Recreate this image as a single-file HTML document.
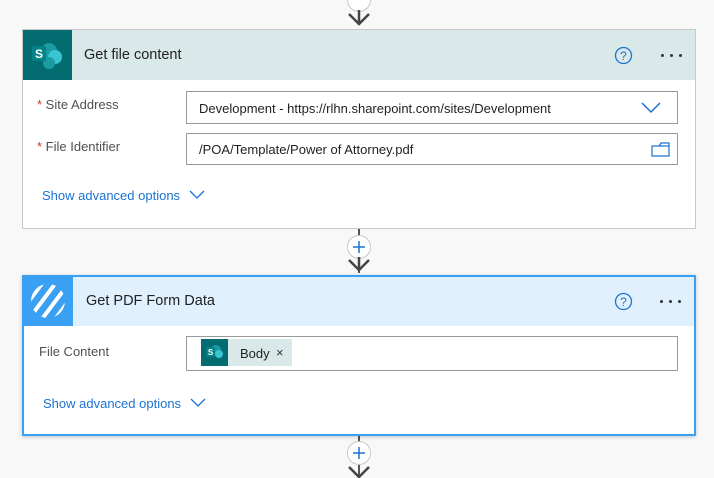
<!DOCTYPE html><html><head><style>
body{margin:0;width:714px;height:475px;background:#f8f8f8;font-family:"Liberation Sans",sans-serif;position:relative;overflow:hidden;font-size:13px;color:#323130}
.abs{position:absolute}
.card{position:absolute;left:22px;width:674px;background:#fff}
.lbl{position:absolute;font-size:13px;color:#505050}
.req{color:#d13438}
.inp{position:absolute;left:163px;width:492px;border:1px solid #9a9a9a;background:#fff;box-sizing:border-box;font-size:13px;color:#222}
.adv{position:absolute;color:#1a73d4;font-size:13px}
.plus{position:absolute;left:347px;width:22px;height:22px;border:1.5px solid #c8c8c8;border-radius:50%;background:#fff}
.dots{position:absolute;width:22px;height:4px}
.dots i{position:absolute;top:0;width:3px;height:3px;border-radius:50%;background:#333}
</style></head><body>
<div class="abs" style="left:358px;top:0;width:2px;height:20px;background:#555"></div>
<div class="plus" style="top:-12px"></div>
<svg class="abs" style="left:347px;top:10px" width="24" height="20"><path d="M2 4L12 14L22 4M12 0V15" stroke="#444" stroke-width="2.5" fill="none"/></svg>
<div class="abs" style="left:358px;top:229px;width:2px;height:44px;background:#555"></div>
<div class="plus" style="top:235px"><svg width="22" height="22" style="position:absolute;left:0;top:0"><path d="M11 5V17M5 11H17" stroke="#1a73d4" stroke-width="1.5"/></svg></div>
<svg class="abs" style="left:347px;top:257px" width="24" height="18"><path d="M2 3L12 13L22 3M12 0V14" stroke="#444" stroke-width="2.5" fill="none"/></svg>
<div class="abs" style="left:358px;top:436px;width:2px;height:40px;background:#555"></div>
<div class="plus" style="top:441px"><svg width="22" height="22" style="position:absolute;left:0;top:0"><path d="M11 5V17M5 11H17" stroke="#1a73d4" stroke-width="1.5"/></svg></div>
<svg class="abs" style="left:347px;top:464px" width="24" height="14"><path d="M2 3L12 13L22 3" stroke="#444" stroke-width="2.5" fill="none"/></svg>

<div class="card" style="top:29px;height:200px;border:1px solid #c8c8c8;box-sizing:border-box">
 <div class="abs" style="left:0;top:0;width:672px;height:50px;background:#d9e8e8"></div>
 <div class="abs" style="left:0;top:0;width:49px;height:50px;background:#036c70">
  <svg width="49" height="50"><circle cx="26" cy="21" r="8" fill="#1a9ba1"/><circle cx="32" cy="27" r="7" fill="#37c6d0"/><circle cx="26" cy="33" r="6" fill="#1a9ba1"/><rect x="9" y="16" width="14" height="15" rx="2" fill="#038387"/><text x="16" y="28" fill="#fff" font-size="12" font-weight="bold" text-anchor="middle" font-family="Liberation Sans">S</text></svg>
 </div>
 <div class="abs" style="left:61px;top:17px;font-size:14.5px;color:#222">Get file content</div>
 <svg class="abs" style="left:591px;top:16px" width="19" height="19"><circle cx="9.5" cy="9.5" r="8" stroke="#1a73d4" stroke-width="1.3" fill="none"/><text x="9.5" y="14" fill="#1a73d4" font-size="12" text-anchor="middle" font-family="Liberation Sans">?</text></svg>
 <div class="dots" style="left:638px;top:24px"><i style="left:0"></i><i style="left:9px"></i><i style="left:18px"></i></div>
 <div class="lbl" style="left:14px;top:67px"><span class="req">*</span> Site Address</div>
 <div class="inp" style="top:61px;height:33px;padding:9px 0 0 12px">Development - https://rlhn.sharepoint.com/sites/Development
  <svg class="abs" style="left:454px;top:10px" width="20" height="12"><path d="M1 1L10 10L19 1" stroke="#1a73d4" stroke-width="1.5" fill="none"/></svg></div>
 <div class="lbl" style="left:14px;top:109px"><span class="req">*</span> File Identifier</div>
 <div class="inp" style="top:103px;height:32px;padding:8px 0 0 12px">/POA/Template/Power of Attorney.pdf
  <svg class="abs" style="left:464px;top:8px" width="20" height="16"><path d="M1 4H8L10 1H18V14H1Z M1 4V14 M8 4H18" stroke="#1a73d4" stroke-width="1.2" fill="none"/></svg></div>
 <div class="adv" style="left:19px;top:158px">Show advanced options <svg width="18" height="10" style="margin-left:4px"><path d="M2 1L9 8L16 1" stroke="#1a73d4" stroke-width="1.3" fill="none"/></svg></div>
</div>

<div class="card" style="top:275px;height:161px;border:2px solid #3aa0f3;box-sizing:border-box;box-shadow:0 1px 4px rgba(0,0,0,.2)">
 <div class="abs" style="left:0;top:0;width:670px;height:49px;background:#e0f0fd"></div>
 <div class="abs" style="left:0;top:0;width:49px;height:49px;background:#3aa0f3">
  <svg width="49" height="49"><defs><clipPath id="c"><circle cx="24" cy="24" r="17"/></clipPath></defs><g clip-path="url(#c)" stroke="#fff" stroke-width="4"><path d="M-4 36L26 -4M4 43L34 3M12 50L42 10M20 57L50 17"/></g></svg>
 </div>
 <div class="abs" style="left:62px;top:16px;font-size:14.5px;color:#222">Get PDF Form Data</div>
 <svg class="abs" style="left:590px;top:15px" width="19" height="19"><circle cx="9.5" cy="9.5" r="8" stroke="#1a73d4" stroke-width="1.3" fill="none"/><text x="9.5" y="14" fill="#1a73d4" font-size="12" text-anchor="middle" font-family="Liberation Sans">?</text></svg>
 <div class="dots" style="left:636px;top:23px"><i style="left:0"></i><i style="left:9px"></i><i style="left:18px"></i></div>
 <div class="lbl" style="left:15px;top:67px">File Content</div>
 <div class="inp" style="left:162px;top:59px;height:35px">
  <div class="abs" style="left:14px;top:2px;width:91px;height:27px;background:#d9e8e8"></div>
  <div class="abs" style="left:14px;top:2px;width:27px;height:27px;background:#036c70"><svg width="27" height="27"><circle cx="15" cy="11" r="5" fill="#1a9ba1"/><circle cx="18" cy="15" r="4" fill="#37c6d0"/><rect x="5" y="8" width="9" height="10" rx="1" fill="#038387"/><text x="9.5" y="16" fill="#fff" font-size="8" font-weight="bold" text-anchor="middle" font-family="Liberation Sans">S</text></svg></div>
  <div class="abs" style="left:53px;top:9px;font-size:13px;color:#222">Body</div>
  <div class="abs" style="left:89px;top:8px;font-size:13px;color:#333">×</div>
 </div>
 <div class="adv" style="left:19px;top:119px">Show advanced options <svg width="18" height="10" style="margin-left:4px"><path d="M2 1L9 8L16 1" stroke="#1a73d4" stroke-width="1.3" fill="none"/></svg></div>
</div>
</body></html>
